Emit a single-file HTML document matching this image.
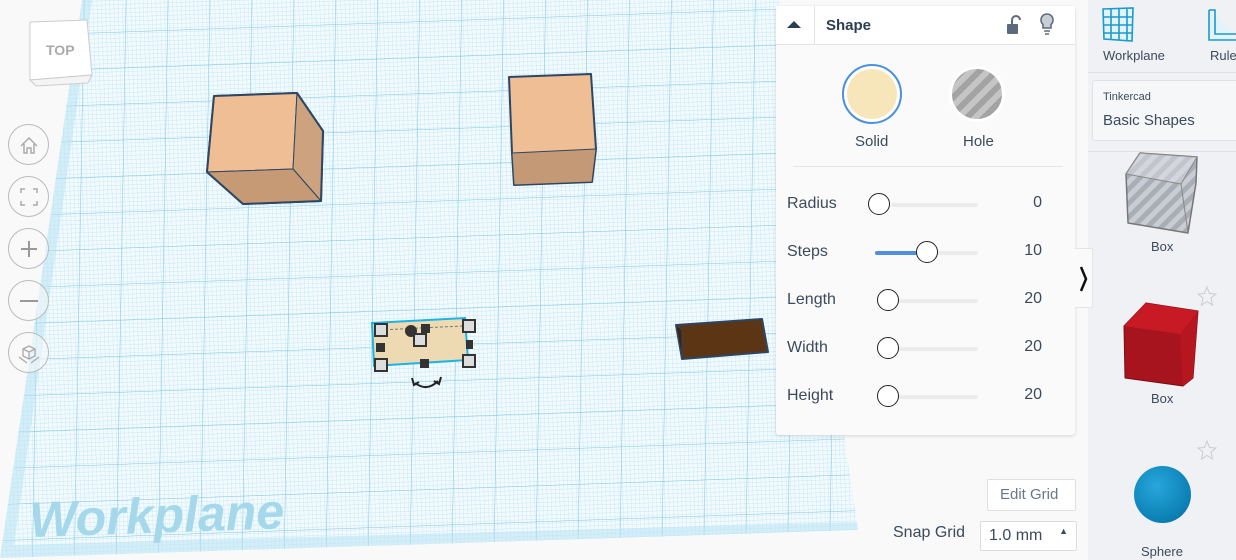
<!DOCTYPE html>
<html><head><meta charset="utf-8"><style>
*{margin:0;padding:0;box-sizing:border-box}
body{width:1236px;height:560px;overflow:hidden;background:#f9f9f9;font-family:"Liberation Sans",sans-serif;position:relative;color:#3c4a5c}
.abs{position:absolute}
.panel{left:776px;top:6px;width:299px;height:429px;background:#fafafa;border-radius:3px;box-shadow:0 1px 3px rgba(0,0,0,.15)}
.hdr{height:39px;background:#fff;border-bottom:1px solid #e2e4e8;position:relative}
.lbl{font-size:16px;color:#3c4a5c}
.track{position:absolute;height:4px;background:#ececec;border-radius:2px}
.knob{position:absolute;width:22px;height:22px;border-radius:50%;background:#fff;border:1.5px solid #222}
.val{position:absolute;right:33px;font-size:16px;color:#3c4a5c}
.side{left:1088px;top:0;width:148px;height:560px;background:#f0f1f4}
.btn{position:absolute;left:8px;width:41px;height:41px;border-radius:50%;border:1.3px solid #bbb;background:rgba(250,250,250,.55)}
</style></head><body>
<svg class="abs" style="left:0;top:0" width="1236" height="560">
<defs>
<pattern id="mn" width="4.2" height="4.2" patternUnits="userSpaceOnUse" patternTransform="rotate(-2)">
<path d="M0 0H4.2M0 0V4.2" stroke="#b6e2f3" stroke-width="0.6" fill="none"/></pattern>
<pattern id="mj" width="42" height="36" patternUnits="userSpaceOnUse" patternTransform="rotate(-2) skewX(-3)">
<path d="M0 0H42M0 0V36" stroke="#7cc5e2" stroke-width="1" fill="none"/></pattern>
<clipPath id="wp"><polygon points="82,0 780,0 858,530 0,558"/></clipPath>
</defs>
<g clip-path="url(#wp)">
<rect width="900" height="560" fill="#f2fafd"/>
<rect width="900" height="560" fill="url(#mn)"/>
<rect width="900" height="560" fill="url(#mj)"/>
<polygon points="82,0 92,0 14,545 860,522 858,530 0,558" fill="#b6e2f3" opacity=".5"/>
</g>
<text x="30" y="537" font-family="Liberation Sans" font-weight="bold" font-style="italic" font-size="50" fill="#a6d8ec" transform="rotate(-2 30 537)">Workplane</text>
<g stroke="#2d4663" stroke-width="2" stroke-linejoin="round">
<polygon points="214,96 297,93 323,131 321,201 243,204 207,172" fill="#c9a07c"/>
<polygon points="214,96 297,93 293,169 207,172" fill="#f0be94" stroke-width="1"/>
<polygon points="297,93 323,131 321,201 293,169" fill="#cda27e" stroke-width="1"/>
<polygon points="207,172 293,169 321,201 243,204" fill="#c69a75" stroke-width="1"/>
<polygon points="214,96 297,93 323,131 321,201 243,204 207,172" fill="none"/>
<polygon points="509,77 591,74 596,149 592,182 514,185 512,153" fill="#f0be94"/>
<polygon points="512,153 596,149 592,182 514,185" fill="#c49a76" stroke-width="1"/>
<polygon points="676,325 762,319 768,352 682,359" fill="#5c3514"/>
<polygon points="676,325 682,330 682,359" fill="#3f240d" stroke-width="1"/>
</g>
<polygon points="372,323 465,318 468,360 374,366" fill="#edd9b2" stroke="#18b4e8" stroke-width="2"/>
<line x1="380" y1="330" x2="462" y2="326" stroke="#777" stroke-dasharray="3 2"/>
<g fill="#ddd" stroke="#333" stroke-width="2">
<rect x="375" y="324" width="12" height="12"/><rect x="463" y="320" width="12" height="12"/>
<rect x="375" y="359" width="12" height="12"/><rect x="463" y="355" width="12" height="12"/>
<rect x="414" y="334" width="12" height="12"/>
</g>
<g fill="#333"><rect x="376" y="343" width="9" height="9"/><rect x="421" y="324" width="9" height="9"/><rect x="420" y="359" width="9" height="9"/><rect x="466" y="340" width="7" height="9"/><circle cx="411" cy="331" r="6"/></g>
<path d="M415 383 Q427 392 438 381" stroke="#222" stroke-width="2" fill="none"/>
<path d="M412 378 l2 7 l5 -3 M441 377 l-2 7 l-5 -3" stroke="#222" stroke-width="2" fill="none"/>
<polygon points="30,22 87,20 92,75 30,80" fill="#fff" stroke="#ccc"/>
<polygon points="30,80 92,75 88,83 36,86" fill="#f4f4f4" stroke="#ccc"/>
<text x="46" y="55" font-size="14" font-weight="bold" fill="#aaa">TOP</text>
</svg>

<div class="btn" style="top:124px"><svg width="41" height="41"><path d="M12 21 L20 13 L28 21 M15 19 V28 H18 V23 H22 V28 H25 V19" stroke="#aaa" stroke-width="1.5" fill="none"/></svg></div>
<div class="btn" style="top:176px"><svg width="41" height="41"><path d="M12 16V12H16M24 12H28V16M28 24V28H24M16 28H12V24" stroke="#aaa" stroke-width="1.5" fill="none"/></svg></div>
<div class="btn" style="top:228px"><svg width="41" height="41"><path d="M12 20H28M20 12V28" stroke="#999" stroke-width="2" fill="none"/></svg></div>
<div class="btn" style="top:280px"><svg width="41" height="41"><path d="M11 20H29" stroke="#999" stroke-width="2" fill="none"/></svg></div>
<div class="btn" style="top:332px"><svg width="41" height="41"><path d="M14 16L20 13L26 16V23L20 26L14 23Z M14 16L20 19L26 16 M20 19V26 M10 24L18 30 M30 24L22 30" stroke="#aaa" stroke-width="1.3" fill="none"/></svg></div>

<div class="abs panel">
 <div class="hdr">
  <svg class="abs" style="left:10px;top:13px" width="16" height="10"><path d="M1 9L8 2L15 9Z" fill="#2d3e50"/></svg>
  <div class="abs" style="left:38px;top:0;width:1px;height:39px;background:#e2e4e8"></div>
  <div class="abs" style="left:50px;top:11px;font-size:15px;font-weight:bold;color:#2d3e50">Shape</div>
  <svg class="abs" style="left:230px;top:8px" width="16" height="22"><path d="M6 10V6a4 4 0 0 1 8 0" stroke="#5b6b7d" stroke-width="2" fill="none"/><rect x="1" y="10" width="11" height="10" rx="1" fill="#5b6b7d"/></svg>
  <svg class="abs" style="left:263px;top:7px" width="16" height="24"><path d="M8 1a6 6 0 0 0-4 10.5V15h8v-3.5A6 6 0 0 0 8 1z" stroke="#5b6b7d" stroke-width="1.6" fill="#c9ced4"/><path d="M5 18h6M6 21h4" stroke="#5b6b7d" stroke-width="1.6"/></svg>
 </div>
 <div class="abs" style="left:66px;top:58px;width:60px;height:60px;border-radius:50%;border:2px solid #4a90e2;background:#f8e6bb;box-shadow:inset 0 0 0 3px #fff"></div>
 <div class="abs lbl" style="left:79px;top:127px;font-size:15px">Solid</div>
 <div class="abs" style="left:173px;top:60px;width:56px;height:56px;border-radius:50%;border:3px solid #fff;background:repeating-linear-gradient(135deg,#c5c5c5 0 6px,#a3a3a3 6px 12px)"></div>
 <div class="abs lbl" style="left:187px;top:127px;font-size:15px">Hole</div>
 <div class="abs" style="left:17px;top:160px;width:270px;height:1px;background:#e5e5e5"></div>

 <div class="abs lbl" style="left:11px;top:189px">Radius</div>
 <div class="track" style="left:115px;top:197px;width:87px"></div><div class="knob" style="left:92px;top:187px"></div><div class="val" style="top:188px">0</div>
 <div class="abs lbl" style="left:11px;top:237px">Steps</div>
 <div class="track" style="left:99px;top:245px;width:103px"></div><div class="track" style="left:99px;top:245px;width:42px;background:#4f8fdb"></div><div class="knob" style="left:140px;top:235px"></div><div class="val" style="top:236px">10</div>
 <div class="abs lbl" style="left:11px;top:285px">Length</div>
 <div class="track" style="left:102px;top:293px;width:100px"></div><div class="knob" style="left:101px;top:283px"></div><div class="val" style="top:284px">20</div>
 <div class="abs lbl" style="left:11px;top:333px">Width</div>
 <div class="track" style="left:102px;top:341px;width:100px"></div><div class="knob" style="left:101px;top:331px"></div><div class="val" style="top:332px">20</div>
 <div class="abs lbl" style="left:11px;top:381px">Height</div>
 <div class="track" style="left:102px;top:389px;width:100px"></div><div class="knob" style="left:101px;top:379px"></div><div class="val" style="top:380px">20</div>
</div>

<div class="abs" style="left:987px;top:479px;width:89px;height:32px;border:1px solid #e0e0e0;background:#fff;border-radius:2px;font-size:15px;color:#6b7785;padding:6px 12px">Edit Grid</div>
<div class="abs" style="left:893px;top:524px;font-size:16px;color:#3c4a5c">Snap Grid</div>
<div class="abs" style="left:980px;top:521px;width:97px;height:30px;border:1px solid #ddd;background:#fff;border-radius:2px;font-size:16px;color:#3c4a5c;padding:5px 8px">1.0 mm<span style="position:absolute;right:8px;top:4px;font-size:9px">▲</span></div>

<div class="abs side">
 <svg class="abs" style="left:13px;top:7px" width="34" height="36"><path d="M2 2L32 1L31 34L3 32Z M2 10H32M2 18H32M2 26H32M10 2V33M18 2V33M26 2V33" stroke="#1a9bd0" stroke-width="1.6" fill="#e4f3fa"/></svg>
 <div class="abs" style="left:15px;top:48px;font-size:13px;color:#3c4a5c">Workplane</div>
 <svg class="abs" style="left:118px;top:8px" width="30" height="36"><path d="M3 2V32H30M3 2H9V26H30" stroke="#1a9bd0" stroke-width="1.6" fill="#e4f3fa"/></svg>
 <div class="abs" style="left:122px;top:48px;font-size:13px;color:#3c4a5c">Rule</div>
 <div class="abs" style="left:0;top:72px;width:148px;height:1px;background:#dcdfe4"></div>
 <div class="abs" style="left:4px;top:80px;width:150px;height:61px;background:#f6f7f9;border:1px solid #e0e2e6;border-radius:3px"></div>
 <div class="abs" style="left:15px;top:91px;font-size:11px;color:#3c4a5c">Tinkercad</div>
 <div class="abs" style="left:15px;top:112px;font-size:15px;color:#3c4a5c">Basic Shapes</div>
 <div class="abs" style="left:0;top:151px;width:148px;height:1px;background:#dcdfe4"></div>
</div>
<svg class="abs" style="left:1088px;top:0" width="148" height="560">
<defs><pattern id="hs" width="10" height="10" patternUnits="userSpaceOnUse" patternTransform="rotate(45)"><rect width="10" height="10" fill="#c9ccd3"/><rect width="5" height="10" fill="#a9adb6"/></pattern></defs>
<g stroke-linejoin="round">
<polygon points="38,174 52,153 109,157 108,183 100,233 40,223" fill="url(#hs)" stroke="#777" stroke-width="1.5"/>
<polygon points="38,174 52,153 109,157 93,184" fill="#dfe2e8" opacity=".45"/>
<path d="M38 174 L93 184 L109 157 M93 184 L100 233" stroke="#888" fill="none"/>
<polygon points="36,326 58,303 110,311 105,378 95,386 37,378" fill="#a8141e" stroke="#7a0e15"/>
<polygon points="36,326 58,303 110,311 92,334" fill="#c81a25"/>
<polygon points="92,334 110,311 105,378 95,386" fill="#b5161f"/>
</g>
<path d="M119 287L121.5 293.5L128 294L123 298L124.5 305L119 301.5L113.5 305L115 298L110 294L116.5 293.5Z" stroke="#ccc" fill="none"/>
<path d="M119 441L121.5 447.5L128 448L123 452L124.5 459L119 455.5L113.5 459L115 452L110 448L116.5 447.5Z" stroke="#ccc" fill="none"/>
</svg>
<div class="abs" style="left:1151px;top:239px;font-size:13px;color:#3c4a5c">Box</div>
<div class="abs" style="left:1151px;top:391px;font-size:13px;color:#3c4a5c">Box</div>
<div class="abs" style="left:1134px;top:466px;width:57px;height:57px;border-radius:50%;background:radial-gradient(circle at 40% 35%,#27a7dd,#0b7fb3 70%,#075c85);"></div>
<div class="abs" style="left:1141px;top:544px;font-size:13px;color:#3c4a5c">Sphere</div>
<div class="abs" style="left:1075px;top:248px;width:18px;height:60px;background:#fafafa;border:1px solid #e5e5e5;border-left:none"><svg width="18" height="60"><path d="M6 18L11 30L6 42" stroke="#111" stroke-width="2.5" fill="none"/></svg></div>
</body></html>
